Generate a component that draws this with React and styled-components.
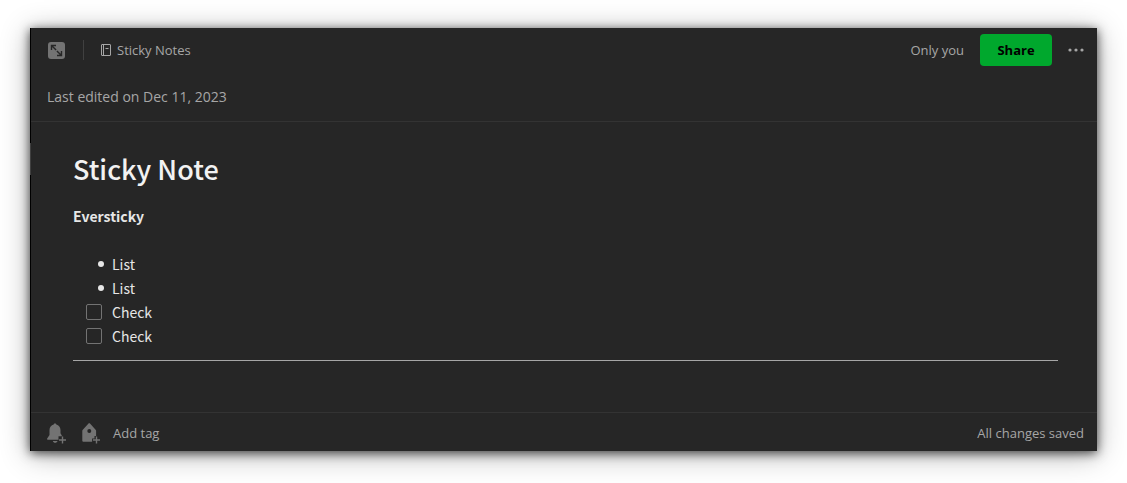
import React, { useState } from 'react'
import styled, { createGlobalStyle } from 'styled-components'

const GlobalStyle = createGlobalStyle`
  * {
    box-sizing: border-box;
  }

  body {
    margin: 0;
    background: #fff;
    font-family: "Open Sans", "Noto Sans", sans-serif;
  }
`

const bullets = ['List', 'List']
const todos = ['Check', 'Check']

const ExpandIcon = () => (
  <svg width="17" height="17" viewBox="0 0 17 17" aria-hidden="true">
    <rect width="17" height="17" rx="3" fill="#737373" />
    <g fill="none" stroke="#262626" strokeWidth="1.4">
      <path d="M3.500 8V3.500H8M3.500 3.500l4.600 4.600" />
      <path d="M9 13.500h4.500V9M13.500 13.500L8.900 8.900" />
    </g>
  </svg>
)

const NotebookIcon = () => (
  <svg width="10" height="12" viewBox="0 0 10 12" aria-hidden="true">
    <g fill="none" stroke="#a6a6a6">
      <rect x=".5" y=".5" width="9" height="11" rx=".5" />
      <path d="M2.5 .5v11M4.5 4.5h3" />
    </g>
  </svg>
)

const DotsIcon = () => (
  <svg width="16" height="4" viewBox="0 0 16 4" fill="#a6a6a6" aria-hidden="true">
    <circle cx="2" cy="2" r="1.6" />
    <circle cx="8" cy="2" r="1.6" />
    <circle cx="14" cy="2" r="1.6" />
  </svg>
)

const ReminderIcon = () => (
  <svg width="22" height="21" viewBox="0 0 22 21" aria-hidden="true">
    <path
      fill="#737373"
      d="M7 .8c.4-.5 1.600-.5 2 0l.3.8c2.500.7 4.200 2.700 4.200 5.400v3.300l1.300 2.200v.8h-3.300v3.500H.8c-.8 0-1-.7-.6-1.300L2.500 12V7C2.500 4.300 4.200 2.300 6.700 1.600z"
    />
    <path fill="#737373" d="M5.800 18h4.700c-.3 1.200-1.200 1.800-2.300 1.800S6.100 19.200 5.800 18z" />
    <path fill="none" stroke="#737373" strokeWidth="1.400" d="M15.500 13.500v7M12 17h7" />
  </svg>
)

const TagIcon = () => (
  <svg width="18" height="21" viewBox="0 0 18 21" aria-hidden="true">
    <path
      fill="#737373"
      fillRule="evenodd"
      d="M6.300.7c.5-.6 1.400-.6 1.900 0l5.400 6c.3.4.5.8.5 1.300v5h-1.600v2.400h-2.400v3.400H1.700C.8 18.800.3 18.300.3 17.400V8c0-.5.2-.9.5-1.300zM7.300 6a2 2 0 1 0 0 4 2 2 0 0 0 0-4z"
    />
    <path fill="none" stroke="#737373" strokeWidth="1.400" d="M14.500 13.500v7M11 17h7" />
  </svg>
)

const App = () => {
  const [checked, setChecked] = useState(todos.map(() => false))

  const toggle = (idx) => {
    setChecked(checked.map((value, i) => (i === idx ? !value : value)))
  }

  return (
    <Page>
      <GlobalStyle />
      <Window>
        <Toolbar>
          <IconButton aria-label="Expand note">
            <ExpandIcon />
          </IconButton>
          <Divider />
          <NotebookLink href="#notebook">
            <NotebookIcon />
            Sticky Notes
          </NotebookLink>
          <Actions>
            <Small>Only you</Small>
            <ShareButton>Share</ShareButton>
            <IconButton aria-label="More actions">
              <DotsIcon />
            </IconButton>
          </Actions>
        </Toolbar>
        <EditedBar>Last edited on Dec 11, 2023</EditedBar>
        <Note>
          <Title>Sticky Note</Title>
          <Lead>Eversticky</Lead>
          <BulletList>
            {bullets.map((item, idx) => (
              <Bullet key={idx}>{item}</Bullet>
            ))}
          </BulletList>
          {todos.map((item, idx) => (
            <Todo key={idx}>
              <Checkbox type="checkbox" checked={checked[idx]} onChange={() => toggle(idx)} />
              {item}
            </Todo>
          ))}
          <Rule />
        </Note>
        <Footer>
          <IconButton aria-label="Add reminder">
            <ReminderIcon />
          </IconButton>
          <IconButton aria-label="Edit tags">
            <TagIcon />
          </IconButton>
          <TagButton>Add tag</TagButton>
          <SaveState>All changes saved</SaveState>
        </Footer>
      </Window>
    </Page>
  )
}

const Page = styled.div`
  padding: 28px 30px 32px;
`

const Window = styled.main`
  background: #262626;
  border-left: 1px solid #000;
  color: #e6e6e6;
  box-shadow: 0 2px 10px rgba(0, 0, 0, 0.7), 0 4px 28px rgba(0, 0, 0, 0.3);
`

const Toolbar = styled.header`
  display: flex;
  align-items: center;
  height: 44px;
  padding: 0 13px 0 17px;
`

const IconButton = styled.button`
  display: flex;
  padding: 0;
  border: 0;
  background: none;
  cursor: pointer;
`

const Divider = styled.span`
  width: 1px;
  height: 20px;
  margin: 0 17px 0 18px;
  background: #404040;
`

const NotebookLink = styled.a`
  display: flex;
  align-items: center;
  gap: 6px;
  color: #a6a6a6;
  font-size: 13px;
  text-decoration: none;
`

const Actions = styled.div`
  display: flex;
  align-items: center;
  gap: 16px;
  margin-left: auto;
`

const Small = styled.span`
  color: #a6a6a6;
  font-size: 13px;
`

const ShareButton = styled.button`
  width: 72px;
  height: 32px;
  padding: 0;
  border: 0;
  border-radius: 4px;
  background: #00a82d;
  color: #000;
  font-family: inherit;
  font-size: 13px;
  font-weight: 700;
  cursor: pointer;
`

const EditedBar = styled.div`
  padding: 15px 16px 14px;
  border-bottom: 1px solid #333;
  color: #a6a6a6;
  font-size: 14px;
  line-height: 20px;
`

const Note = styled.article`
  position: relative;
  padding: 27px 39px 51px 42px;
  font-family: "Noto Sans CJK JP", "Noto Sans", sans-serif;
  font-size: 14px;
  line-height: 24px;

  /* sidebar handle, sits on the window border */
  &::before {
    content: "";
    position: absolute;
    top: 21px;
    left: -1px;
    width: 1px;
    height: 32px;
    background: #404040;
  }
`

const Title = styled.h1`
  margin: 0 0 15px;
  color: #f2f2f2;
  font-size: 27px;
  font-weight: 500;
  line-height: 40px;
`

const Lead = styled.p`
  margin: 0 0 24px;
  font-weight: 700;
`

const BulletList = styled.ul`
  margin: 0;
  padding: 0;
  list-style: none;
`

const Bullet = styled.li`
  display: flex;
  align-items: center;
  gap: 8px;
  padding-left: 25px;

  &::before {
    content: "";
    width: 6px;
    height: 6px;
    border-radius: 50%;
    background: #e6e6e6;
  }
`

const Todo = styled.label`
  display: flex;
  align-items: center;
  gap: 10px;
  padding-left: 13px;
`

const Checkbox = styled.input`
  appearance: none;
  width: 16px;
  height: 16px;
  margin: 0;
  border: 1px solid #737373;
  border-radius: 2px;

  &:checked {
    background: #00a82d;
  }
`

const Rule = styled.hr`
  margin: 12px 0 0;
  border: 0;
  border-top: 1px solid #a6a6a6;
`

const Footer = styled.footer`
  display: flex;
  align-items: center;
  gap: 13px;
  height: 39px;
  padding: 2px 13px 0 16px;
  border-top: 1px solid #333;
`

const TagButton = styled.button`
  padding: 0;
  border: 0;
  background: none;
  color: #a6a6a6;
  font-family: inherit;
  font-size: 13px;
  cursor: pointer;
`

const SaveState = styled(Small)`
  margin-left: auto;
`

export default App
